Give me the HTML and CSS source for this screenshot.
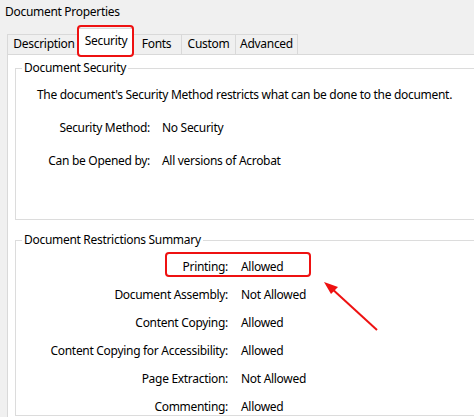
FILE: index.html
```html
<!DOCTYPE html>
<html>
<head>
<meta charset="utf-8">
<link rel="stylesheet" href="styles.css">
</head>
<body>
<div class="window">
  <div class="title">Document Properties</div>
  <div class="tabs">
    <div class="tab t-desc">Description</div>
    <div class="tab active t-sec">Security</div>
    <div class="tab t-fonts">Fonts</div>
    <div class="tab t-custom">Custom</div>
    <div class="tab t-adv">Advanced</div>
  </div>
  <div class="panel">
    <fieldset class="group g1">
      <legend>Document Security</legend>
      <p class="intro">The document's Security Method restricts what can be done to the document.</p>
      <div class="rows sec-rows">
        <div class="lbl">Security Method:</div><div class="val">No Security</div>
        <div class="lbl">Can be Opened by:</div><div class="val">All versions of Acrobat</div>
      </div>
    </fieldset>
    <fieldset class="group g2">
      <legend>Document Restrictions Summary</legend>
      <div class="rows res-rows">
        <div class="lbl">Printing:</div><div class="val">Allowed</div>
        <div class="lbl">Document Assembly:</div><div class="val">Not Allowed</div>
        <div class="lbl">Content Copying:</div><div class="val">Allowed</div>
        <div class="lbl">Content Copying for Accessibility:</div><div class="val">Allowed</div>
        <div class="lbl">Page Extraction:</div><div class="val">Not Allowed</div>
        <div class="lbl">Commenting:</div><div class="val">Allowed</div>
      </div>
    </fieldset>
  </div>
  <div class="hl hl-tab"></div>
  <div class="hl hl-print"></div>
  <svg class="arrow" width="474" height="417" viewBox="0 0 474 417">
    <line x1="377" y1="330" x2="330" y2="287" stroke="#ee1111" stroke-width="2"/>
    <polygon points="324,282 338,287 331,294" fill="#ee1111"/>
  </svg>
</div>
</body>
</html>
```

FILE: styles.css
```css
html, body {
  margin: 0;
  padding: 0;
  background: #f0f0f0;
}
body {
  font-family: "Noto Sans", "Open Sans", sans-serif;
  font-size: 12px;
  letter-spacing: -0.3px;
  color: #000;
  overflow: hidden;
  width: 474px;
  height: 417px;
}
.window {
  position: relative;
  width: 474px;
  height: 417px;
  overflow: hidden;
}
.title {
  padding: 4px 0 0 5px;
  height: 17px;
  line-height: 16px;
}
.tabs {
  display: flex;
  align-items: flex-end;
  margin-left: 7px;
  height: 33px;
  position: relative;
  z-index: 2;
}
.tab {
  box-sizing: border-box;
  height: 20px;
  line-height: 18px;
  border: 1px solid #d9d9d9;
  border-bottom: none;
  background: #f0f0f0;
  text-align: center;
  margin-right: -1px;
}
.tab.active {
  height: 27px;
  background: #fff;
  line-height: 24px;
  margin: 0 -3px -1px -2px;
  position: relative;
  z-index: 3;
}
.t-desc { width: 74px; }
.t-sec { width: 56px; }
.t-fonts { width: 51px; }
.t-custom { width: 55px; }
.t-adv { width: 63px; }
.panel {
  margin-left: 7px;
  background: #fff;
  border-top: 1px solid #d9d9d9;
  border-left: 1px solid #d9d9d9;
  height: 400px;
  padding: 5px 0 0 7px;
  box-sizing: border-box;
}
.group {
  margin: 0 -20px 0 0;
  padding: 0;
  border: 1px solid #dcdcdc;
  min-width: 0;
}
.group legend {
  padding: 0 2px;
  margin-left: 6px;
  line-height: 16px;
}
.g1 {
  padding-bottom: 50px;
}
.g2 {
  margin-top: 12px;
}
.intro {
  margin: 11px 0 0 21px;
  line-height: 16px;
}
.rows {
  display: grid;
  line-height: 16px;
}
.sec-rows {
  grid-template-columns: 134px auto;
  column-gap: 12px;
  row-gap: 17px;
  margin-top: 17px;
}
.res-rows {
  grid-template-columns: 212px auto;
  column-gap: 13px;
  row-gap: 12px;
  margin-top: 11px;
}
.lbl { text-align: right; }
.hl {
  position: absolute;
  border: 2px solid #ee1111;
  border-radius: 4px;
  box-sizing: border-box;
  z-index: 5;
}
.hl-tab {
  left: 77px;
  top: 25px;
  width: 57px;
  height: 32px;
}
.hl-print {
  left: 165px;
  top: 252px;
  width: 146px;
  height: 25px;
}
.arrow {
  position: absolute;
  left: 0;
  top: 0;
  z-index: 6;
}
```
